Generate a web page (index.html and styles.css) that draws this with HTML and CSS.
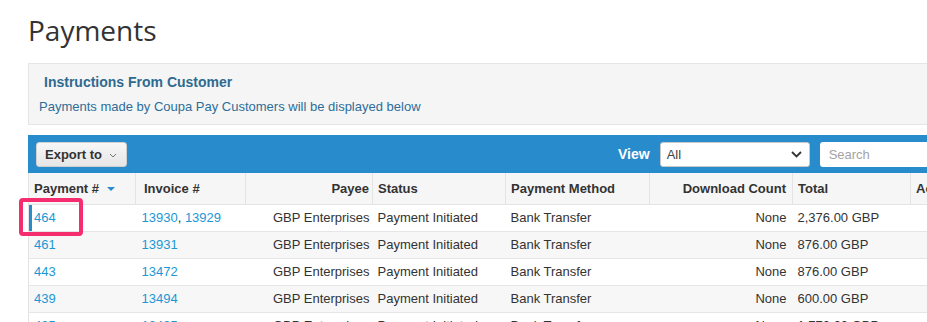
FILE: index.html
```html
<!DOCTYPE html>
<html>
<head>
<meta charset="utf-8">
<link rel="stylesheet" href="styles.css">
</head>
<body>
<div class="page">
  <h1 class="title">Payments</h1>
  <div class="notice">
    <div class="notice-head">Instructions From Customer</div>
    <div class="notice-text">Payments made by Coupa Pay Customers will be displayed below</div>
  </div>
  <div class="toolbar">
    <button class="export">Export to <svg class="chev-sm" width="8" height="5" viewBox="0 0 8 5"><path d="M1 1 L4 4 L7 1" fill="none" stroke="#777" stroke-width="1"/></svg></button>
    <div class="toolbar-right">
      <span class="view-label">View</span>
      <div class="select"><span>All</span><svg width="11" height="7" viewBox="0 0 11 7"><path d="M1 1 L5.5 5.5 L10 1" fill="none" stroke="#333" stroke-width="1.8"/></svg></div>
      <div class="search">Search</div>
    </div>
  </div>
  <table class="grid">
    <colgroup>
      <col class="c1"><col class="c2"><col class="c3"><col class="c4"><col class="c5"><col class="c6"><col class="c7"><col class="c8">
    </colgroup>
    <thead>
      <tr>
        <th>Payment # <span class="sort"></span></th>
        <th>Invoice #</th>
        <th class="r">Payee</th>
        <th>Status</th>
        <th>Payment Method</th>
        <th class="r dl">Download Count</th>
        <th>Total</th>
        <th>Actions</th>
      </tr>
    </thead>
    <tbody>
      <tr class="selected">
        <td class="first"><a>464</a><span class="highlight"></span></td>
        <td><a>13930</a>, <a>13929</a></td>
        <td class="r">GBP Enterprises</td>
        <td>Payment Initiated</td>
        <td>Bank Transfer</td>
        <td class="r">None</td>
        <td>2,376.00 GBP</td>
        <td></td>
      </tr>
      <tr>
        <td><a>461</a></td>
        <td><a>13931</a></td>
        <td class="r">GBP Enterprises</td>
        <td>Payment Initiated</td>
        <td>Bank Transfer</td>
        <td class="r">None</td>
        <td>876.00 GBP</td>
        <td></td>
      </tr>
      <tr>
        <td><a>443</a></td>
        <td><a>13472</a></td>
        <td class="r">GBP Enterprises</td>
        <td>Payment Initiated</td>
        <td>Bank Transfer</td>
        <td class="r">None</td>
        <td>876.00 GBP</td>
        <td></td>
      </tr>
      <tr>
        <td><a>439</a></td>
        <td><a>13494</a></td>
        <td class="r">GBP Enterprises</td>
        <td>Payment Initiated</td>
        <td>Bank Transfer</td>
        <td class="r">None</td>
        <td>600.00 GBP</td>
        <td></td>
      </tr>
      <tr>
        <td><a>435</a></td>
        <td><a>13495</a></td>
        <td class="r">GBP Enterprises</td>
        <td>Payment Initiated</td>
        <td>Bank Transfer</td>
        <td class="r">None</td>
        <td>1,770.00 GBP</td>
        <td></td>
      </tr>
    </tbody>
  </table>
</div>
</body>
</html>
```

FILE: styles.css
```css
html, body {
  margin: 0;
  padding: 0;
  background: #fff;
  overflow: hidden;
}
body {
  font-family: "Liberation Sans", Arial, sans-serif;
  font-size: 13px;
  color: #333;
}
.page {
  padding-left: 28px;
  width: 1000px;
}
.title {
  font-family: "Open Sans", "Liberation Sans", sans-serif;
  font-weight: 400;
  font-size: 28px;
  line-height: 38px;
  margin: 0;
  padding: 11px 0 14px 0;
  color: #333;
}
.notice {
  background: #f5f5f5;
  border-top: 1px solid #e5e5e5;
  border-bottom: 1px solid #e5e5e5;
  border-left: 1px solid #e5e5e5;
  height: 60px;
  box-sizing: content-box;
  padding: 0;
}
.notice-head {
  font-weight: bold;
  font-size: 14px;
  color: #2e6a90;
  padding: 10px 0 0 15px;
  line-height: 16px;
}
.notice-text {
  font-size: 13px;
  color: #2d6d9a;
  padding: 9px 0 0 10px;
  line-height: 16px;
}
.toolbar {
  margin-top: 10px;
  background: #288bcc;
  height: 38px;
  display: flex;
  align-items: center;
  padding-left: 8px;
}
.export {
  font-family: "Liberation Sans", Arial, sans-serif;
  font-weight: bold;
  font-size: 13px;
  color: #333;
  height: 25px;
  width: 91px;
  border: 1px solid #d0d0d0;
  border-radius: 3px;
  background: linear-gradient(#f7f7f7, #e6e6e6);
  display: flex;
  align-items: center;
  padding: 0 0 0 8px;
  gap: 7px;
  margin: 0;
}
.chev-sm {
  margin-top: 2px;
}
.toolbar-right {
  display: flex;
  align-items: center;
  margin-left: 491px;
}
.view-label {
  color: #fff;
  font-weight: bold;
  font-size: 14px;
  margin-right: 10px;
}
.select {
  width: 150px;
  height: 25px;
  box-sizing: border-box;
  background: #fff;
  border: 1px solid #c9c9c9;
  border-radius: 3px;
  display: flex;
  align-items: center;
  justify-content: space-between;
  padding: 0 7px 0 6px;
  color: #444;
  font-size: 13px;
}
.search {
  margin-left: 10px;
  width: 150px;
  height: 25px;
  box-sizing: border-box;
  background: #fff;
  border-radius: 3px;
  display: flex;
  align-items: center;
  padding-left: 9px;
  color: #a3a3a3;
  font-size: 13px;
}
.grid {
  border-collapse: collapse;
  table-layout: fixed;
  width: 982px;
  border-left: 1px solid #e3e3e3;
}
.c1 { width: 107px; }
.c2 { width: 110px; }
.c3 { width: 127px; }
.c4 { width: 133px; }
.c5 { width: 144px; }
.c6 { width: 143px; }
.c7 { width: 118px; }
.c8 { width: 100px; }
.grid th {
  background: #f6f6f6;
  height: 31px;
  box-sizing: border-box;
  font-weight: bold;
  text-align: left;
  padding: 1px 5px 0 5px;
  border-right: 1px solid #e4e4e4;
  border-bottom: 1px solid #e4e4e4;
  white-space: nowrap;
  overflow: hidden;
  color: #333;
}
.grid th:nth-child(2) { padding-left: 8px; }
.grid td {
  height: 27px;
  box-sizing: border-box;
  padding: 0 5px;
  border-bottom: 1px solid #e6e6e6;
  white-space: nowrap;
  overflow: hidden;
  color: #333;
}
.grid td:nth-child(2) { padding-left: 6px; }
.grid .r { text-align: right; padding-right: 3px; }
.grid th.r { padding-right: 3px; }
.grid th.dl { padding-right: 6px; }
.grid td.r:nth-child(6) { padding-right: 6px; }
.grid tbody tr:nth-child(even) td { background: #f7f7f7; }
.grid a { color: #1a98d5; }
.sort {
  display: inline-block;
  width: 0;
  height: 0;
  border-left: 4px solid transparent;
  border-right: 4px solid transparent;
  border-top: 4px solid #2a8acb;
  margin-left: 4px;
  vertical-align: 2px;
}
.grid td.first {
  position: relative;
  overflow: visible;
  box-shadow: inset 3px 0 0 #2a8acb;
}
.highlight {
  position: absolute;
  left: -10px;
  top: -7px;
  width: 64px;
  height: 38px;
  box-sizing: border-box;
  border: 4px solid #f52d6e;
  border-radius: 4px;
}
```
